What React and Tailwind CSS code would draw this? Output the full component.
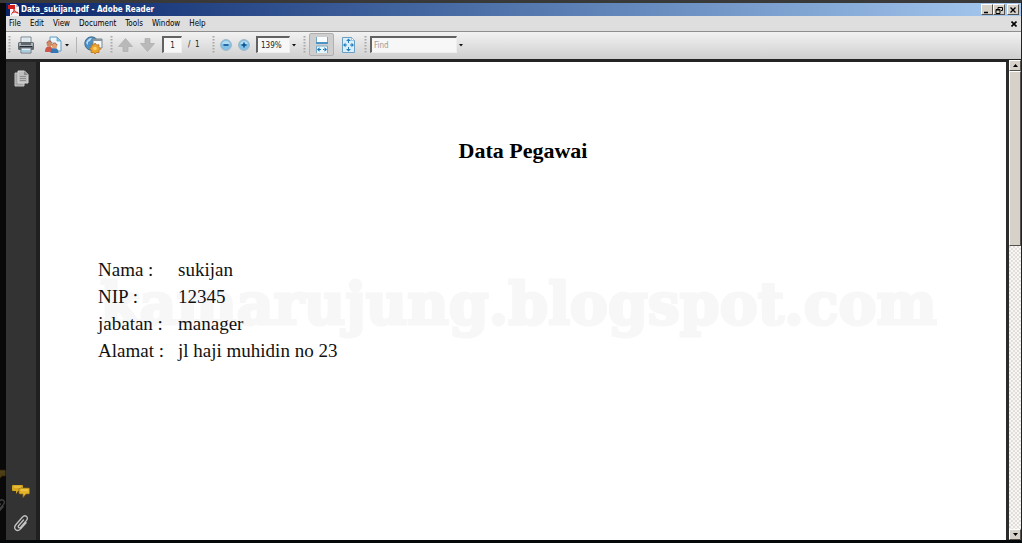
import React from "react";

const uiFont = "font-['DejaVu_Sans_Condensed','Noto_Sans',sans-serif]";

function Grip() {
  return (
    <svg className="h-5 w-1 shrink-0" viewBox="0 0 4 20" aria-hidden="true">
      <path d="M1.5 1v18" stroke="#a9a9a9" strokeWidth="2" strokeDasharray="1.5 1.5" />
    </svg>
  );
}

function Caret() {
  return (
    <svg className="h-1 w-1" viewBox="0 0 4 4" aria-hidden="true">
      <path d="M0 1h4L2 3.4z" fill="#111" />
    </svg>
  );
}

function PdfIcon() {
  return (
    <svg className="h-3 w-3 shrink-0" viewBox="0 0 12 12" aria-hidden="true">
      <path d="M2 0h6l3 3v9H2z" fill="#f8f4f4" />
      <path d="M8 0v3h3z" fill="#b9b9c4" />
      <path d="M0 1h7v4H0z" fill="#d31c1c" />
      <path d="M3 10.5C5 9 6 7 6 5.2c.8 2.600 2.200 3.800 4.500 4M4 8.700c2-.9 4-.9 6-.2" fill="none" stroke="#d62828" />
    </svg>
  );
}

function PrinterIcon() {
  return (
    <svg className="h-[18px] w-[18px]" viewBox="0 0 18 18" aria-hidden="true">
      <path d="M4 1h10v7H4z" fill="#f6f9fb" stroke="#78838b" />
      <path d="M5.500 3h7M5.500 5h7" stroke="#bfd0dc" />
      <rect x="1" y="6" width="16" height="8" rx="1.500" fill="#60686e" />
      <path d="M2 7h2v2h10V7h2v3H2z" fill="#a9b3b9" />
      <path d="M3 10h12v1H3z" fill="#262b2f" />
      <path d="M4 12h10v5H4z" fill="#e6f1f7" stroke="#65737e" />
      <path d="M5 14h8v2H5z" fill="#a5cfe3" />
    </svg>
  );
}

function CollaborateIcon() {
  return (
    <svg className="h-[18px] w-[18px]" viewBox="0 0 18 18" aria-hidden="true">
      <path d="M6 1h7l4 4v10H6z" fill="#eaf5fc" stroke="#639cc2" />
      <path d="M13 1v4h4z" fill="#8dc4e6" stroke="#639cc2" strokeWidth=".7" />
      <path d="M1 16c0-4 1.500-5.500 4-5.500S9 12 9 16z" fill="#cf5546" />
      <circle cx="5.300" cy="8" r="2.600" fill="#d08a62" />
      <path d="M6.500 17c0-4 1.500-5 4-5s4 1.500 4 5z" fill="#3675b8" />
      <circle cx="10.500" cy="10" r="2.600" fill="#e0a070" />
      <path d="M3 7.200c.3-3 4.500-3 5 0M8 9.300c.5-3 4.500-3 5 0" fill="none" stroke="#a74733" />
    </svg>
  );
}

function WebIcon() {
  return (
    <svg className="h-[18px] w-5" viewBox="0 0 20 18" aria-hidden="true">
      <circle cx="7.500" cy="7.500" r="6.700" fill="#4b91c7" stroke="#426b8b" />
      <path d="M2 7c1-3 3-5 6-5L6 5 4 6v3z" fill="#b9ddf1" />
      <path d="M9 3h9v9H9z" fill="#f4f7f8" stroke="#7a858c" />
      <path d="M9 3h9v2H9z" fill="#8a969e" />
      <path d="m12 8 1.500 2 2.500-.2-.2 2.500 2 1.700-2 1.300.2 2.300-2.600-.2L12 19l-1.300-1.600-2.600.2.200-2.500-2-1.300 2-1.500-.2-2.400 2.600.1z" transform="translate(-1 -1)" fill="#eca62d" stroke="#b66d14" strokeWidth=".8" />
      <circle cx="11" cy="12.500" r="1.700" fill="#ffd164" />
    </svg>
  );
}

function ArrowIcon({ down = false }) {
  return (
    <svg className="h-[14px] w-[15px]" viewBox="0 0 15 14" aria-hidden="true">
      <path
        d={down ? "M5 .5h5v5h4.500l-7 8-7-8H5z" : "M7.500.5l7 8H10v5H5v-5H.5z"}
        fill="#b9b9b9"
        stroke="#acacac"
        strokeWidth=".7"
      />
    </svg>
  );
}

function ZoomIcon({ plus = false }) {
  return (
    <svg className="h-3 w-3" viewBox="0 0 12 12" aria-hidden="true">
      <circle cx="6" cy="6" r="5.400" fill="#83c0e5" stroke="#9bb5c6" />
      <path d="M2 5a4.200 4.200 0 0 1 8 0z" fill="#b3dcf3" />
      <path d={plus ? "M3.500 6h5M6 3.500v5" : "M3.500 6h5"} stroke="#084e8c" strokeWidth="1.500" />
    </svg>
  );
}

function FitWidthIcon() {
  return (
    <svg className="h-4 w-3" viewBox="0 0 12 16" aria-hidden="true">
      <path d="M.5 0v6.500h11V0" fill="#fafdff" stroke="#78a9c8" />
      <path d="M0 5h12v2H0z" fill="#4b94c5" />
      <path d="M.5 16V9h11v7" fill="#e7f5fd" stroke="#78a9c8" />
      <path d="M1 12.500l2.500-2.300v4.600zM11 12.500l-2.500-2.300v4.600zM3 12h2v1H3zM7 12h2v1H7z" fill="#1673b3" />
    </svg>
  );
}

function FitPageIcon() {
  return (
    <svg className="h-4 w-[13px]" viewBox="0 0 13 16" aria-hidden="true">
      <path d="M.5.5h9l3 3v12H.5z" fill="#d9effb" stroke="#6b9fc1" />
      <path d="M9.500.5v3h3z" fill="#fff" stroke="#6b9fc1" strokeWidth=".6" />
      <path d="M6.500 1.500 9 4H7v2H6V4H4zM6.500 14.500 4 12h2v-2h1v2h2zM1 8l2.500-2.300v1.800H5v1H3.500v1.800zM12 8 9.500 5.700v1.800H8v1h1.500v1.800z" fill="#287fb9" />
    </svg>
  );
}

function PagesIcon() {
  return (
    <svg className="h-[17px] w-[15px]" viewBox="0 0 15 17" aria-hidden="true">
      <path d="M1 3h9v13H1z" fill="#a5a5a5" stroke="#c5c5c5" />
      <path d="M4 1h6.500L14 4.500V13H4z" fill="#bdbdbd" stroke="#dadada" />
      <path d="M10 1v4h4" fill="#8b8b8b" />
      <path d="M6 6.500h6M6 8.500h6M6 10.500h6" stroke="#8d8d8d" />
    </svg>
  );
}

function CommentsIcon() {
  return (
    <svg className="h-[14px] w-[18px]" viewBox="0 0 18 14" aria-hidden="true">
      <path d="M1 1h9q1 0 1 1v4q0 1-1 1H6L4 10V7H1Q0 7 0 6V2q0-1 1-1z" fill="#d7a51e" />
      <path d="M8 4h8.500q1 0 1 1v4q0 1-1 1H14l-3 3.500V10H8q-1 0-1-1V5q0-1 1-1z" fill="#e3b32a" stroke="#8e6815" strokeWidth=".7" />
      <path d="M9 6h7M2 3h7" stroke="#f5d25a" />
    </svg>
  );
}

function ClipIcon() {
  return (
    <svg className="h-[18px] w-4" viewBox="0 0 16 18" aria-hidden="true">
      <path
        d="M10.500 6 5.700 11.500c-1.300 1.600.6 3.100 1.900 1.700l5.700-6.500c3-3.600-1-6.700-4-3.400L3 10.500c-3.500 4.300 1.300 8.200 4.900 4.100l5.200-5.900"
        fill="none"
        stroke="#c3c3c3"
        strokeWidth="1.300"
        strokeLinecap="round"
      />
    </svg>
  );
}

const raised = "border border-t-white border-l-white border-r-[#55524e] border-b-[#55524e] bg-[#d6d2ca]";

function WindowButton({ label, children }) {
  return (
    <button aria-label={label} className={`flex h-[11px] w-3 items-center justify-center ${raised}`}>
      <svg className="h-2 w-2" viewBox="0 0 8 8" fill="none" stroke="#000" aria-hidden="true">
        {children}
      </svg>
    </button>
  );
}

function TitleBar() {
  return (
    <header className="flex h-[13px] items-center bg-linear-to-r from-[#0a246a] to-[#a6caf0] pl-[2px] pr-[2px]">
      <PdfIcon />
      <h1 className={`pl-px text-[8px] leading-3 font-bold whitespace-nowrap text-white ${uiFont}`}>
        Data_sukijan.pdf - Adobe Reader
      </h1>
      <div className="ml-auto flex">
        <WindowButton label="Minimize"><path d="M1 6.500h4" strokeWidth="1.500" /></WindowButton>
        <WindowButton label="Restore">
          <path d="M3 3V1.500h4.500v3H6M1 7.500v-4h4v4zM1 4h4M3 1.500h4" />
        </WindowButton>
        <div className="w-[2px]" />
        <WindowButton label="Close"><path d="m1.500 1.500 5 5m0-5-5 5" strokeWidth="1.300" /></WindowButton>
      </div>
    </header>
  );
}

function MenuBar() {
  const items = ["File", "Edit", "View", "Document", "Tools", "Window", "Help"];
  return (
    <nav className="flex h-4 items-center border-b border-[#8e8e8e] bg-[#dedede] pl-[3px] pr-1">
      <div className={`flex gap-[9px] text-[8px] leading-3 text-black ${uiFont}`}>
        {items.map((item) => (
          <button key={item}>{item}</button>
        ))}
      </div>
      <button aria-label="Close document" className="ml-auto">
        <svg className="h-[6px] w-[6px]" viewBox="0 0 6 6" aria-hidden="true">
          <path d="m.5.5 5 5m0-5-5 5" stroke="#000" strokeWidth="1.600" />
        </svg>
      </button>
    </nav>
  );
}

const field =
  "h-[17px] border-t-2 border-l-2 border-r border-b border-t-[#626262] border-l-[#626262] border-r-[#eee] border-b-[#eee] bg-[#f7f7f7] text-[8px] leading-3 outline-none";

function Toolbar() {
  return (
    <div className={`flex h-[27px] items-center bg-linear-to-b from-[#f2f2f2] to-[#cfcfcf] pb-[2px] pl-[2px] text-[8px] text-[#222] ${uiFont}`}>
      <Grip />
      <div className="flex items-center pl-[5px]">
        <button aria-label="Print"><PrinterIcon /></button>
        <button aria-label="Collaborate" className="ml-[9px] flex items-center gap-[3px]">
          <CollaborateIcon />
          <Caret />
        </button>
        <div className="mx-[7px] h-4 w-px bg-[#b4b4b4]" />
        <button aria-label="Web tools"><WebIcon /></button>
      </div>
      <div className="flex items-center pl-[6px]">
        <Grip />
        <button aria-label="Previous page" className="ml-1"><ArrowIcon /></button>
        <button aria-label="Next page" className="ml-[7px]"><ArrowIcon down /></button>
        <input aria-label="Page number" defaultValue="1" className={`ml-[7px] w-5 text-center ${field}`} />
        <span className="w-[24px] pl-[6px] whitespace-pre">/  1</span>
      </div>
      <div className="flex items-center pl-[6px]">
        <Grip />
        <button aria-label="Zoom out" className="ml-1"><ZoomIcon /></button>
        <button aria-label="Zoom in" className="ml-[6px]"><ZoomIcon plus /></button>
        <input aria-label="Zoom level" defaultValue="139%" className={`ml-[6px] w-[34px] pl-[3px] ${field}`} />
        <button aria-label="Zoom presets" className="ml-[2px]"><Caret /></button>
      </div>
      <div className="flex items-center pl-[7px]">
        <Grip />
        <button aria-label="Fit width" aria-pressed="true" className="ml-[2px] flex h-[23px] w-[25px] items-center justify-center rounded-[2px] border border-[#b0b0b0] bg-[#cecece]">
          <FitWidthIcon />
        </button>
        <button aria-label="Fit page" className="ml-2"><FitPageIcon /></button>
      </div>
      <div className="flex items-center pl-[9px]">
        <Grip />
        <input aria-label="Find" placeholder="Find" className={`ml-[2px] w-[87px] pl-[2px] placeholder:text-[#999] ${field}`} />
        <button aria-label="Find options" className="ml-[2px]"><Caret /></button>
      </div>
    </div>
  );
}

function ScrollButton({ label, down = false }) {
  return (
    <button aria-label={label} className={`flex h-[11px] w-full shrink-0 items-center justify-center ${raised}`}>
      <svg className="h-[3px] w-[5px]" viewBox="0 0 5 3" aria-hidden="true">
        <path d={down ? "M0 0h5L2.500 3z" : "M0 3h5L2.500 0z"} fill="#000" />
      </svg>
    </button>
  );
}

function Scrollbar() {
  return (
    <div className="-mt-[2px] flex w-3 flex-col bg-[#efedea] bg-[repeating-conic-gradient(#e2dfda_0_25%,#f8f7f5_0_50%)] bg-[length:4px_4px]">
      <ScrollButton label="Scroll up" />
      <div className={`h-[175px] ${raised}`} />
      <div className="flex-1" />
      <ScrollButton label="Scroll down" down />
    </div>
  );
}

const fields = [
  ["Nama :", "sukijan"],
  ["NIP :", "12345"],
  ["jabatan :", "manager"],
  ["Alamat :", "jl haji muhidin no 23"],
];

function DocumentPage() {
  return (
    <main className="relative flex-1 bg-white font-['Liberation_Serif',serif] text-[#111]">
      <h2 className="pt-[75px] text-center text-[22px] leading-7 font-bold text-black">Data Pegawai</h2>
      <div
        aria-hidden="true"
        className="absolute top-[208px] left-[60px] font-['DejaVu_Serif',serif] text-[57px] leading-[68px] font-bold whitespace-nowrap text-[#f7f7f7] [-webkit-text-stroke:3px_#f7f7f7]"
      >
        kamarujung.blogspot.com
      </div>
      <dl className="relative grid grid-cols-[80px_1fr] pt-[91px] pl-[58px] text-[19px] leading-[27px]">
        {fields.map(([label, value]) => (
          <React.Fragment key={label}>
            <dt className="whitespace-nowrap">{label}</dt>
            <dd>{value}</dd>
          </React.Fragment>
        ))}
      </dl>
    </main>
  );
}

export default function App() {
  return (
    <div className="flex min-h-screen border-t-[3px] border-r border-b-[3px] border-t-[#393939] border-r-[#222] border-b-[#050808] bg-[#090909]">
      <div className="flex w-[6px] shrink-0 flex-col items-end justify-end overflow-hidden pb-6 opacity-30">
        <CommentsIcon />
        <div className="h-[18px] shrink-0" />
        <ClipIcon />
      </div>
      <div className="flex min-w-0 flex-1 flex-col">
        <TitleBar />
        <MenuBar />
        <Toolbar />
        <div className="flex flex-1 border-t-[3px] border-[#242424] bg-[#333]">
          <aside className="flex w-[34px] shrink-0 flex-col items-center border-r-4 border-[#202020] pt-2 pb-2">
            <button aria-label="Pages"><PagesIcon /></button>
            <button aria-label="Comments" className="mt-auto"><CommentsIcon /></button>
            <button aria-label="Attachments" className="mt-4"><ClipIcon /></button>
          </aside>
          <DocumentPage />
          <div className="w-[3px] bg-[#2c2c2c]" />
          <Scrollbar />
        </div>
      </div>
    </div>
  );
}
